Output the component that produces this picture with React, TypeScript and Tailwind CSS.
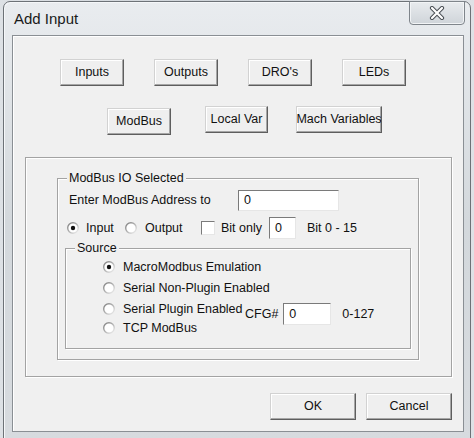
import React from 'react';

const font = { fontFamily: '"Liberation Sans", Arial, sans-serif' };

function WinButton({ label, className = '' }: { label: string; className?: string }) {
  return (
    <div
      className={`flex h-[27px] items-center justify-center overflow-hidden whitespace-nowrap border border-b-[#5e5e5e] border-l-[#d2d2d2] border-r-[#5e5e5e] border-t-[#d2d2d2] bg-[#efefef] text-[12.5px] text-[#111] shadow-[inset_-1px_-1px_0_#a6a6a6,inset_1px_1px_0_#ffffff] ${className}`}
    >
      {label}
    </div>
  );
}

function Radio({ checked = false }: { checked?: boolean }) {
  return (
    <svg width="12" height="12" viewBox="0 0 12 12" className="shrink-0">
      <defs>
        <linearGradient id="rg" x1="0" y1="0" x2="1" y2="1">
          <stop offset="0" stopColor="#7c7c7c" />
          <stop offset="0.55" stopColor="#b8b8b8" />
          <stop offset="1" stopColor="#f4f4f4" />
        </linearGradient>
      </defs>
      <circle cx="6" cy="6" r="5.3" fill="#ffffff" stroke="url(#rg)" strokeWidth="1.4" />
      {checked && <circle cx="6" cy="6" r="2.2" fill="#111111" />}
    </svg>
  );
}

function Field({ value, className = '' }: { value: string; className?: string }) {
  return (
    <div
      className={`flex shrink-0 items-center border border-b-[#e6e6e6] border-l-[#7a7a7a] border-r-[#e6e6e6] border-t-[#7a7a7a] bg-white pl-[5px] text-[12.5px] text-[#111] ${className}`}
    >
      {value}
    </div>
  );
}

function Group({
  title,
  titleLeft,
  className = '',
  children,
}: {
  title?: string;
  titleLeft?: number;
  className?: string;
  children?: React.ReactNode;
}) {
  return (
    <div
      className={`relative border border-[#a3a3a3] shadow-[1px_1px_0_#ffffff,inset_1px_1px_0_#ffffff] ${className}`}
    >
      {title && (
        <span
          className="absolute top-[-9px] bg-[#f0f0f0] px-[2px] text-[12.5px] leading-[16px] text-[#111]"
          style={{ left: titleLeft }}
        >
          {title}
        </span>
      )}
      {children}
    </div>
  );
}

export default function App() {
  const sources = [
    { label: 'MacroModbus Emulation', checked: true },
    { label: 'Serial Non-Plugin Enabled' },
    { label: 'Serial Plugin Enabled' },
    { label: 'TCP ModBus' },
  ];

  return (
    <div
      className="h-[438px] w-[474px] overflow-hidden bg-gradient-to-r from-[#dde1e5] via-[#cdd2d7] to-[#dfe2e6]"
      style={font}
    >
      <div className="relative ml-[3px] mt-[1px] h-[440px] w-[468px] rounded-tl-[7px] rounded-tr-[7px] border border-[#6d7277] bg-gradient-to-b from-[#e9ecef] via-[#d3d8dc] to-[#d7dbdf] shadow-[inset_1px_1px_0_#f5f7f9]">
        {/* title bar */}
        <div className="flex h-[33px] items-center pl-[10px] pt-[2px] text-[15px] text-[#1a1a1a]">
          Add Input
        </div>
        <div className="absolute right-[5px] top-[-1px] flex h-[24px] w-[56px] items-center justify-center rounded-b-[4px] border border-[#7f858b] bg-gradient-to-b from-[#e8ebee] to-[#cfd4d9] shadow-[inset_0_0_0_1px_#f2f4f6]">
          <svg width="18" height="14" viewBox="0 0 18 14">
            <path d="M4 2 L14 12 M14 2 L4 12" stroke="#4a4f55" strokeWidth="4.2" strokeLinecap="round" />
            <path d="M4 2 L14 12 M14 2 L4 12" stroke="#ffffff" strokeWidth="2.2" strokeLinecap="round" />
          </svg>
        </div>

        {/* client area */}
        <div className="ml-[8px] h-[397px] w-[452px] border border-[#8a8f94] bg-[#f0f0f0] text-[#111] shadow-[inset_1px_1px_0_#ffffff]">
          <div className="ml-[47px] mt-[23px] flex gap-[30px]">
            <WinButton label="Inputs" className="w-[64px]" />
            <WinButton label="Outputs" className="w-[64px]" />
            <WinButton label="DRO's" className="w-[64px]" />
            <WinButton label="LEDs" className="w-[64px]" />
          </div>

          <div className="ml-[94px] mt-[20px] flex items-start">
            <WinButton label="ModBus" className="mt-[2px] w-[64px]" />
            <WinButton label="Local Var" className="ml-[34px] w-[63px]" />
            <WinButton label="Mach Variables" className="ml-[28px] w-[86px]" />
          </div>

          <Group className="ml-[12px] mt-[22px] h-[220px] w-[427px] pl-[31px] pt-[20px]">
            <Group
              title="ModBus IO Selected"
              titleLeft={9}
              className="h-[182px] w-[362px] pl-[9px] pt-[11px]"
            >
              <div className="flex items-center">
                <span className="ml-[2px] w-[169px] text-[12.5px]">Enter ModBus Address to</span>
                <Field value="0" className="h-[21px] w-[101px]" />
              </div>

              <div className="mt-[6px] flex items-center whitespace-nowrap text-[12.5px]">
                <Radio checked />
                <span className="ml-[7px] w-[32px]">Input</span>
                <span className="ml-[7px] flex">
                  <Radio />
                </span>
                <span className="ml-[8px] w-[48px]">Output</span>
                <span className="ml-[8px] h-[14px] w-[14px] shrink-0 border border-b-[#e6e6e6] border-l-[#7a7a7a] border-r-[#e6e6e6] border-t-[#7a7a7a] bg-white" />
                <span className="ml-[6px] w-[40px]">Bit only</span>
                <Field value="0" className="ml-[8px] h-[22px] w-[27px]" />
                <span className="ml-[11px]">Bit 0 - 15</span>
              </div>

              <Group
                title="Source"
                titleLeft={9}
                className="ml-[-2px] mt-[9px] flex h-[101px] w-[346px] pl-[37px] pt-[10px]"
              >
                <div className="flex w-[139px] shrink-0 flex-col text-[12.5px]">
                  {sources.map((s, i) => (
                    <div
                      key={s.label}
                      className={`flex h-[16px] items-center ${i === 0 ? '' : i === 3 ? 'mt-[3px]' : 'mt-[5px]'}`}
                    >
                      <Radio checked={s.checked} />
                      <span className="ml-[8px] whitespace-nowrap">{s.label}</span>
                    </div>
                  ))}
                </div>
                <div className="ml-[3px] mt-[44px] flex h-[22px] items-center self-start text-[12.5px]">
                  <span>CFG#</span>
                  <Field value="0" className="ml-[5px] h-[22px] w-[48px]" />
                  <span className="ml-[11px]">0-127</span>
                </div>
              </Group>
            </Group>
          </Group>

          <div className="mt-[16px] flex w-[439px] justify-end gap-[10px]">
            <WinButton label="OK" className="w-[86px]" />
            <WinButton label="Cancel" className="w-[86px]" />
          </div>
        </div>
      </div>
    </div>
  );
}
